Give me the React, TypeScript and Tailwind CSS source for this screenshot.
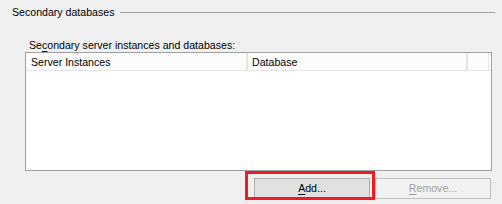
import React from "react";

export default function App() {
  return (
    <div className="relative w-[502px] h-[204px] overflow-hidden bg-[#f0f0f0] text-[10.6px] text-black font-['Liberation_Sans',Arial,sans-serif]">
      <div className="mt-[5px] flex h-[14px] items-center pl-[12px] pr-[7px]">
        <span className="leading-[14px] whitespace-nowrap">Secondary databases</span>
        <div className="ml-[6px] h-px flex-1 bg-[#a0a0a0]" />
      </div>
      <div className="mt-[19px] pl-[29px] leading-[14px] whitespace-nowrap">
        Se<span className="underline underline-offset-[2px]">c</span>ondary server instances and databases:
      </div>
      <div className="ml-[25px] w-[467px] h-[119px] border border-[#a0a0a0] bg-white">
        <div className="flex h-[18px] border-b border-[#e5e5e5] bg-[#fcfcfc]">
          <div className="w-[222px] border-r-2 border-[#e5e5e5] pl-[5px] pt-[2px] leading-[15px] whitespace-nowrap">Server Instances</div>
          <div className="w-[220px] border-r-2 border-[#e5e5e5] pl-[4px] pt-[2px] leading-[15px] whitespace-nowrap">Database</div>
          <div className="w-[21px] border-r border-[#e5e5e5]" />
        </div>
      </div>
      <div className="mt-[7px] flex pl-[254px]">
        <div className="flex h-[21px] w-[116px] items-center justify-center border border-[#adadad] bg-[#e1e1e1] leading-[19px]">
          <span><span className="underline underline-offset-[2px]">A</span>dd...</span>
        </div>
        <div className="ml-[5px] flex h-[21px] w-[116px] items-center justify-center border border-[#bfbfbf] bg-[#f2f2f2] leading-[19px] text-[#a0a0a0]">
          <span><span className="underline underline-offset-[2px]">R</span>emove...</span>
        </div>
      </div>
      <div className="absolute left-[245px] top-[171px] h-[29px] w-[130px] border-[3px] border-[#ed1c24]" />
    </div>
  );
}
